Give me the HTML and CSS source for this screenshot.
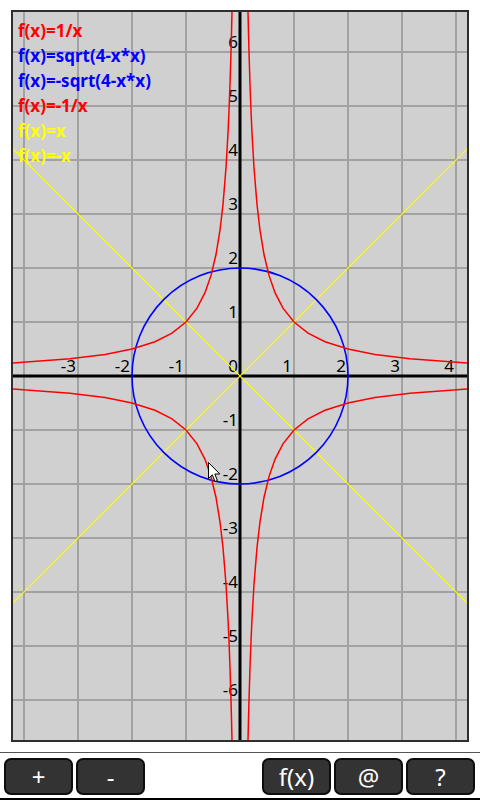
FILE: index.html
```html
<!DOCTYPE html>
<html>
<head>
<meta charset="utf-8">
<link rel="stylesheet" href="styles.css">
</head>
<body>
<div class="screen">
  <div class="plot">
    <svg class="graph" width="454" height="728" viewBox="13 12 454 728" xmlns="http://www.w3.org/2000/svg">
      <rect x="0" y="0" width="480" height="800" fill="#d0d0d0"/>
      <g class="grid">
        <line x1="24" y1="0" x2="24" y2="800"/>
        <line x1="78" y1="0" x2="78" y2="800"/>
        <line x1="132" y1="0" x2="132" y2="800"/>
        <line x1="186" y1="0" x2="186" y2="800"/>
        <line x1="294" y1="0" x2="294" y2="800"/>
        <line x1="348" y1="0" x2="348" y2="800"/>
        <line x1="402" y1="0" x2="402" y2="800"/>
        <line x1="456" y1="0" x2="456" y2="800"/>
        <line x1="0" y1="52" x2="480" y2="52"/>
        <line x1="0" y1="106" x2="480" y2="106"/>
        <line x1="0" y1="160" x2="480" y2="160"/>
        <line x1="0" y1="214" x2="480" y2="214"/>
        <line x1="0" y1="268" x2="480" y2="268"/>
        <line x1="0" y1="322" x2="480" y2="322"/>
        <line x1="0" y1="430" x2="480" y2="430"/>
        <line x1="0" y1="484" x2="480" y2="484"/>
        <line x1="0" y1="538" x2="480" y2="538"/>
        <line x1="0" y1="592" x2="480" y2="592"/>
        <line x1="0" y1="646" x2="480" y2="646"/>
        <line x1="0" y1="700" x2="480" y2="700"/>
      </g>
      <g class="axes">
        <line x1="0" y1="376" x2="480" y2="376"/>
        <line x1="240" y1="0" x2="240" y2="800"/>
      </g>
      <g class="labels">
        <text x="76" y="372">-3</text>
        <text x="130" y="372">-2</text>
        <text x="184" y="372">-1</text>
        <text x="238" y="372">0</text>
        <text x="292" y="372">1</text>
        <text x="346" y="372">2</text>
        <text x="400" y="372">3</text>
        <text x="454" y="372">4</text>
        <text x="238" y="48">6</text>
        <text x="238" y="102">5</text>
        <text x="238" y="156">4</text>
        <text x="238" y="210">3</text>
        <text x="238" y="264">2</text>
        <text x="238" y="318">1</text>
        <text x="238" y="426">-1</text>
        <text x="238" y="480">-2</text>
        <text x="238" y="534">-3</text>
        <text x="238" y="588">-4</text>
        <text x="238" y="642">-5</text>
        <text x="238" y="696">-6</text>
      </g>
      <g transform="translate(240,376)">
        <line class="yellow" x1="-420" y1="420" x2="420" y2="-420"/>
        <line class="yellow" x1="-420" y1="-420" x2="420" y2="420"/>
        <circle class="blue" cx="0" cy="0" r="108"/>
        <path id="hyp" class="red" d="M7.9,-369 L8.5,-343 L9,-324 L10,-291.6 L11,-265 L12,-243 L14,-208.3 L17,-171.5 L20,-145.8 L24,-121.5 L29,-100.6 L35,-83.3 L43,-67.8 L54,-54 L68,-42.9 L85,-34.3 L108,-27 L135,-21.6 L170,-17.2 L230,-12.7"/>
        <use href="#hyp" transform="rotate(180)"/>
        <use href="#hyp" transform="scale(-1,1)"/>
        <use href="#hyp" transform="scale(1,-1)"/>
      </g>
      <g class="legend">
        <text x="18" y="37" class="t-red">f(x)=1/x</text>
        <text x="18" y="62" class="t-blue">f(x)=sqrt(4-x*x)</text>
        <text x="18" y="87" class="t-blue">f(x)=-sqrt(4-x*x)</text>
        <text x="18" y="112" class="t-red">f(x)=-1/x</text>
        <text x="18" y="137" class="t-yellow">f(x)=x</text>
        <text x="18" y="162" class="t-yellow">f(x)=-x</text>
      </g>
    </svg>
  </div>
  <div class="toolbar">
    <div class="group">
      <div class="btn">+</div>
      <div class="btn">-</div>
    </div>
    <div class="group">
      <div class="btn">f(x)</div>
      <div class="btn">@</div>
      <div class="btn">?</div>
    </div>
  </div>
  <svg class="cursor" width="14" height="22" viewBox="0 0 14 22" xmlns="http://www.w3.org/2000/svg">
    <path d="M0.5,0.5 L0.5,16.5 L4.3,12.8 L7,19.5 L9.4,18.5 L6.8,12 L11.8,12 Z" fill="#fff" stroke="#000" stroke-width="1" stroke-linejoin="miter"/>
  </svg>
</div>
</body>
</html>
```

FILE: styles.css
```css
html, body {
  margin: 0;
  padding: 0;
  background: #ffffff;
}

.screen {
  position: relative;
  width: 480px;
  height: 800px;
  overflow: hidden;
  background: #ffffff;
  font-family: "Noto Sans", "DejaVu Sans", sans-serif;
}

.plot {
  margin: 10px 0 0 11px;
  width: 454px;
  height: 728px;
  border: 2px solid #2e2e2e;
}

.graph {
  display: block;
}

.grid line {
  stroke: #a2a2a2;
  stroke-width: 2;
}

.axes line {
  stroke: #000000;
  stroke-width: 3;
}

.labels text {
  font-family: "Noto Sans", "DejaVu Sans", sans-serif;
  font-size: 17px;
  fill: #000000;
  text-anchor: end;
}

.yellow {
  stroke: #ffff00;
  stroke-width: 1.2;
  fill: none;
}

.blue {
  stroke: #0000ff;
  stroke-width: 1.6;
  fill: none;
}

.red {
  stroke: #ff0000;
  stroke-width: 1.5;
  fill: none;
}

.legend text {
  font-family: "Noto Sans", "DejaVu Sans", sans-serif;
  font-weight: bold;
  font-size: 17px;
}

.t-red { fill: #ff0000; }
.t-blue { fill: #0000ff; }
.t-yellow { fill: #ffff00; }

.toolbar {
  margin-top: 10px;
  border-top: 1px solid #555555;
  border-bottom: 2px solid #000000;
  padding: 5px 5px 3px 4px;
  display: flex;
  justify-content: space-between;
}

.group {
  display: flex;
  gap: 3px;
}

.btn {
  box-sizing: border-box;
  width: 69px;
  height: 37px;
  background: #333333;
  border: 2px solid #0d0d0d;
  border-radius: 7px;
  color: #ffffff;
  font-family: "Noto Sans", "DejaVu Sans", sans-serif;
  font-size: 24px;
  display: flex;
  align-items: center;
  justify-content: center;
}

.cursor {
  position: absolute;
  left: 208px;
  top: 462px;
}
```
